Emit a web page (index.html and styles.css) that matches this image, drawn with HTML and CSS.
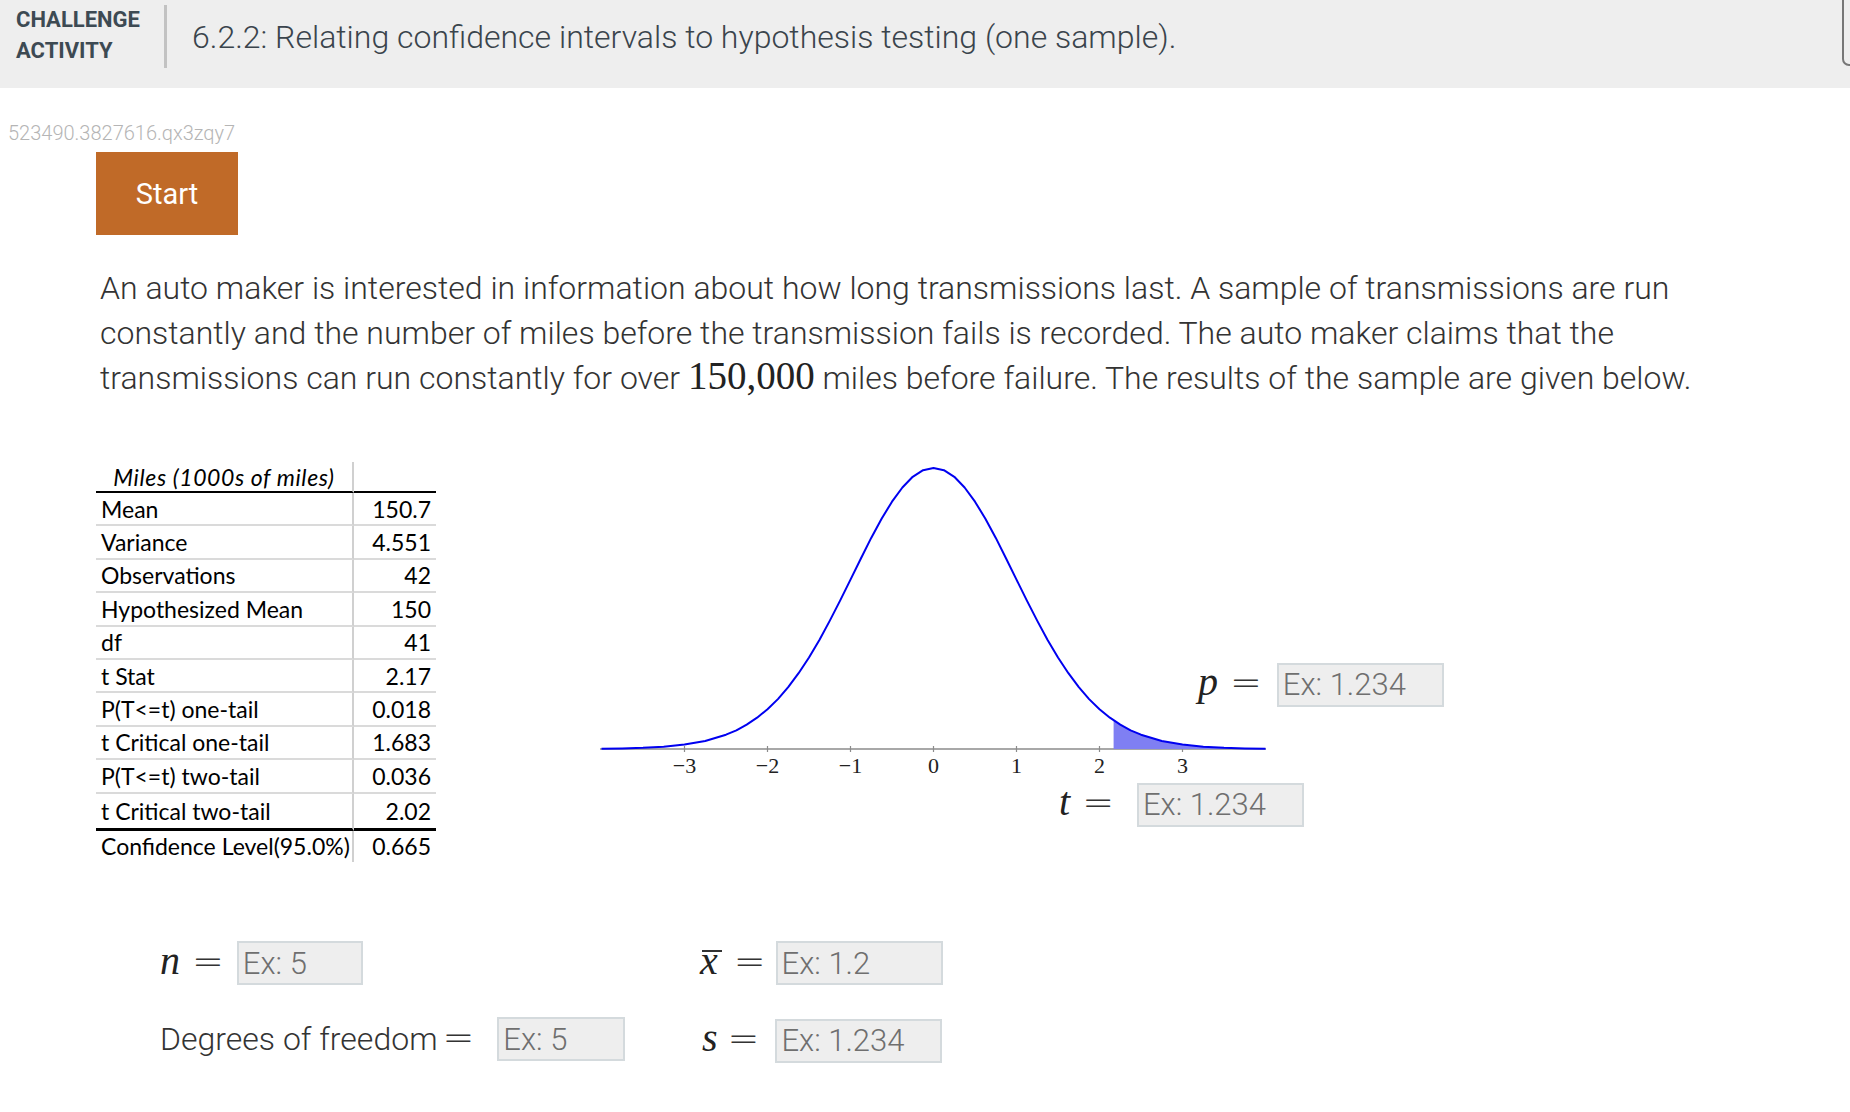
FILE: index.html
```html
<!DOCTYPE html>
<html lang="en">
<head>
<meta charset="utf-8">
<title>6.2.2: Relating confidence intervals to hypothesis testing (one sample)</title>
<link rel="stylesheet" href="styles.css">
</head>
<body>
<header class="hdr">
  <div class="hdr-label">CHALLENGE<br>ACTIVITY</div>
  <div class="hdr-divider"></div>
  <h1 class="hdr-title">6.2.2: Relating confidence intervals to hypothesis testing (one sample).</h1>
  <div class="hdr-tab"></div>
</header>

<main class="main">
  <div class="activity-id">523490.3827616.qx3zqy7</div>
  <button class="start-btn" type="button">Start</button>

  <p class="prompt">An auto maker is interested in information about how long transmissions last. A sample of transmissions are run<br>constantly and the number of miles before the transmission fails is recorded. The auto maker claims that the<br>transmissions can run constantly for over <span class="num">150,000</span> miles before failure. The results of the sample are given below.</p>

  <section class="stats-row">
    <div class="stats">
      <div class="c k h">Miles (1000s of miles)</div><div class="c v h"></div>
      <div class="c k">Mean</div><div class="c v">150.7</div>
      <div class="c k">Variance</div><div class="c v">4.551</div>
      <div class="c k">Observations</div><div class="c v">42</div>
      <div class="c k">Hypothesized Mean</div><div class="c v">150</div>
      <div class="c k">df</div><div class="c v">41</div>
      <div class="c k">t Stat</div><div class="c v">2.17</div>
      <div class="c k">P(T&lt;=t) one-tail</div><div class="c v">0.018</div>
      <div class="c k">t Critical one-tail</div><div class="c v">1.683</div>
      <div class="c k">P(T&lt;=t) two-tail</div><div class="c v">0.036</div>
      <div class="c k end">t Critical two-tail</div><div class="c v end">2.02</div>
      <div class="c k foot">Confidence Level(95.0%)</div><div class="c v foot">0.665</div>
    </div>

    <div class="graph">
      <svg class="graph-svg" width="670" height="330" viewBox="0 0 670 330">
        <path d="M0,289 H666" stroke="#a8a8a8" stroke-width="2" fill="none"/>
        <path d="M84.5,286 V292 M167.5,286 V292 M250.5,286 V292 M333.5,286 V292 M416.5,286 V292 M499.5,286 V292 M582.5,286 V292" stroke="#8c8c8c" stroke-width="1.2" fill="none"/>
        <path d="M513.6,289 L513.6,260.4 L520.3,264.6 L530.6,270.3 L541,274.7 L561.8,281 L582.5,284.6 L603.3,286.7 L624,287.8 L644.8,288.4 L665.5,288.7 L665.5,289 Z" fill="#7f7ff3"/>
        <path d="M1.5,288.7 L22.2,288.4 L43,287.8 L63.7,286.7 L84.5,284.6 L105.2,281 L126,274.7 L136.4,270.3 L146.7,264.6 L157.1,257.7 L167.5,249.2 L177.9,239.1 L188.2,227.1 L198.6,213.2 L209,197.5 L219.4,180 L229.7,160.9 L240.1,140.6 L250.5,119.6 L260.9,98.5 L271.2,77.9 L281.6,58.7 L292,41.7 L302.4,27.5 L312.7,16.8 L323.1,10.2 L333.5,8 L343.9,10.2 L354.3,16.8 L364.6,27.5 L375,41.7 L385.4,58.7 L395.8,77.9 L406.1,98.5 L416.5,119.6 L426.9,140.6 L437.3,160.9 L447.6,180 L458,197.5 L468.4,213.2 L478.8,227.1 L489.1,239.1 L499.5,249.2 L509.9,257.7 L520.3,264.6 L530.6,270.3 L541,274.7 L561.8,281 L582.5,284.6 L603.3,286.7 L624,287.8 L644.8,288.4 L665.5,288.7" stroke="#0000f0" stroke-width="2" fill="none" stroke-linejoin="round"/>
        <g class="tick-labels" text-anchor="middle">
          <text x="84.5" y="313">−3</text>
          <text x="167.5" y="313">−2</text>
          <text x="250.5" y="313">−1</text>
          <text x="333.5" y="313">0</text>
          <text x="416.5" y="313">1</text>
          <text x="499.5" y="313">2</text>
          <text x="582.5" y="313">3</text>
        </g>
      </svg>

      <label class="answer answer-p">
        <span class="mi">p</span><span class="eq eq-p">=</span><input class="field field-wide" type="text" placeholder="Ex: 1.234">
      </label>
      <label class="answer answer-t">
        <span class="mi">t</span><span class="eq eq-t">=</span><input class="field field-wide" type="text" placeholder="Ex: 1.234">
      </label>
    </div>
  </section>

  <section class="givens">
    <div class="givens-col givens-left">
      <label class="given">
        <span class="mi">n</span><span class="eq eq-n">=</span><input class="field field-n" type="text" placeholder="Ex: 5">
      </label>
      <label class="given">
        <span class="word">Degrees of freedom</span><span class="eq eq-df">=</span><input class="field field-df" type="text" placeholder="Ex: 5">
      </label>
    </div>
    <div class="givens-col givens-right">
      <label class="given">
        <span class="mi xbar">x</span><span class="eq eq-x">=</span><input class="field field-wide" type="text" placeholder="Ex: 1.2">
      </label>
      <label class="given given-s">
        <span class="mi">s</span><span class="eq eq-s">=</span><input class="field field-wide" type="text" placeholder="Ex: 1.234">
      </label>
    </div>
  </section>
</main>
</body>
</html>
```

FILE: styles.css
```css
* {
  box-sizing: border-box;
}

html, body {
  margin: 0;
  background: #ffffff;
}

body {
  font-family: Roboto, "Noto Sans", "Liberation Sans", sans-serif;
  font-weight: 300;
  color: #333333;
  overflow: hidden;
}

/* Header bar */
.hdr {
  position: relative;
  overflow: hidden;
  height: 88px;
  background: #eeeeee;
  display: flex;
  align-items: flex-start;
  padding: 4px 0 0 16px;
}

.hdr-label {
  width: 148px;
  font-size: 22px;
  line-height: 31px;
  font-weight: 700;
  color: #3d4a53;
}

.hdr-divider {
  width: 3px;
  height: 63px;
  margin-top: 1px;
  background: #c2c2c2;
}

.hdr-title {
  margin: 13px 0 0 25px;
  font-size: 32px;
  line-height: 40px;
  font-weight: 300;
  color: #3a444c;
}

.hdr-tab {
  position: absolute;
  left: 1842px;
  top: -10px;
  width: 60px;
  height: 76px;
  border: 2px solid #777777;
  border-radius: 7px;
}

/* Body content */
.activity-id {
  margin: 34px 0 0 8px;
  font-size: 20px;
  line-height: 22px;
  color: #b5b5b5;
}

.start-btn {
  display: flex;
  align-items: center;
  justify-content: center;
  width: 142px;
  height: 83px;
  margin: 8px 0 0 96px;
  padding: 0;
  border: 0;
  background: #c06a28;
  color: #ffffff;
  font-family: Roboto, "Noto Sans", sans-serif;
  font-size: 29px;
  font-weight: 400;
}

.prompt {
  margin: 30.5px 0 0 100px;
  width: 1740px;
  font-size: 32px;
  line-height: 45px;
  color: #333333;
}

.num {
  font-family: "Liberation Serif", serif;
  font-size: 39px;
  line-height: 1;
  font-weight: 400;
  color: #222222;
}

/* Stats table + graph */
.stats-row {
  display: flex;
  align-items: flex-start;
  margin: 59.5px 0 0 96px;
}

.stats {
  margin-top: 2px;
  display: grid;
  grid-template-columns: 258px 82px;
  font-family: Lato, "Open Sans", sans-serif;
  font-weight: 400;
  font-size: 23px;
  color: #000000;
}

.stats .c {
  height: 33.4px;
  display: flex;
  align-items: center;
  padding: 0 5px;
  border-bottom: 2px solid #dadada;
  white-space: nowrap;
}

.stats .k {
  border-right: 2px solid #d0d0d0;
}

.stats .v {
  justify-content: flex-end;
}

.stats .h {
  height: 31px;
  border-bottom: 2px solid #000000;
  justify-content: center;
  font-style: italic;
  letter-spacing: 0.6px;
}

.stats .end {
  height: 37.4px;
  border-bottom: 3px solid #000000;
}

.stats .foot {
  height: 31px;
  border-bottom: 0;
}

.graph {
  position: relative;
  width: 850px;
  height: 370px;
  margin-left: 164px;
}

.graph-svg {
  display: block;
}

.tick-labels {
  font-family: "Liberation Serif", serif;
  font-size: 22px;
  fill: #222222;
}

.answer {
  position: absolute;
  display: flex;
  align-items: baseline;
}

.answer-p {
  left: 598px;
  top: 202px;
}

.answer-t {
  left: 459px;
  top: 322px;
}

/* Math pieces */
.mi {
  font-family: "Liberation Serif", serif;
  font-style: italic;
  font-weight: 400;
  font-size: 40px;
  line-height: 1;
  color: #222222;
}

.xbar {
  position: relative;
  display: inline-block;
}

.xbar::before {
  content: "";
  position: absolute;
  left: 2px;
  right: -4px;
  top: 9px;
  border-top: 2px solid #333333;
}

.eq {
  font-family: "DejaVu Sans", sans-serif;
  font-weight: 200;
  font-size: 38px;
  line-height: 1;
  color: #333333;
}

.eq-p { margin: 0 15px 0 12px; }
.eq-t { margin: 0 23px 0 12px; }
.eq-n { margin: 0 13px 0 12px; }
.eq-df { margin: 0 23px 0 5px; }
.eq-x { margin: 0 10px 0 16px; }
.eq-s { margin: 0 16px 0 10px; }

.word {
  font-size: 32px;
  line-height: 1;
  color: #333333;
}

.field {
  height: 44px;
  margin: 0;
  padding: 0 0 0 4px;
  border: 2px solid #d4dadd;
  border-radius: 0;
  background: #eeeeee;
  font-family: Roboto, "Noto Sans", sans-serif;
  font-weight: 300;
  font-size: 31px;
  color: #333333;
  outline: none;
}

.field::placeholder {
  color: #6f6f6f;
  opacity: 1;
}

.field-wide { width: 167px; }
.field-n { width: 126px; }
.field-df { width: 128px; }

/* Given values */
.givens {
  display: flex;
  margin: 79px 0 0 160px;
}

.givens-col {
  display: flex;
  flex-direction: column;
}

.givens-left {
  width: 540px;
  gap: 32px;
}

.givens-right {
  gap: 33px;
}

.given {
  display: flex;
  align-items: baseline;
}

.given-s {
  padding-left: 2px;
}
```
